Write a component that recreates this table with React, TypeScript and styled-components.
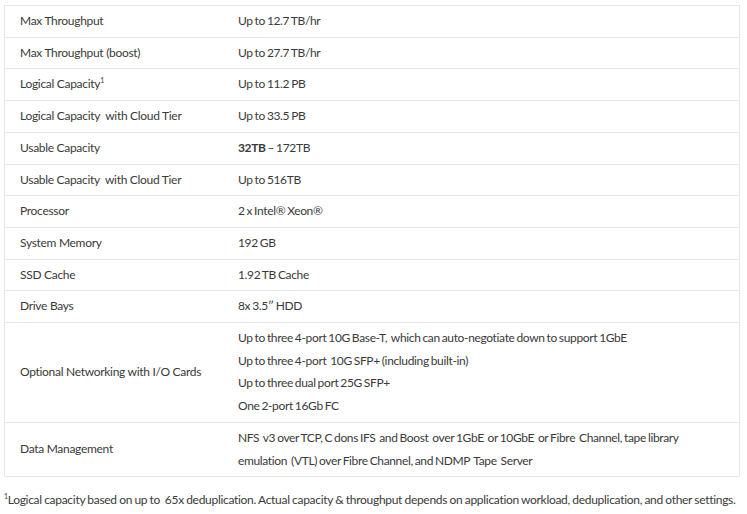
import styled, { createGlobalStyle } from "styled-components";

const colors = {
  text: "#3a3a3a",
  border: "#e6e6e6",
  white: "#fff",
};

const GlobalStyle = createGlobalStyle`
  body {
    margin: 0;
    background: ${colors.white};
    font-family: Lato, "Open Sans", Arial, sans-serif;
    color: ${colors.text};
  }
`;

const Page = styled.div`
  padding: 5px 7px 0 4px;
  font-size: 12px;
  line-height: 22.7px;
  letter-spacing: -0.3px;
`;

const SpecTable = styled.table`
  width: 736px;
  table-layout: fixed;
  border-collapse: collapse;
  border: 1px solid ${colors.border};
`;

const Row = styled.tr`
  border-top: 1px solid ${colors.border};
`;

const LabelCell = styled.td`
  width: 186px;
  padding: 4px 16px 4px 15px;
  vertical-align: middle;
  white-space: nowrap;
`;

const ValueCell = styled.td`
  padding: 4px 16px;
  vertical-align: middle;
  letter-spacing: -0.35px;
  word-spacing: -0.8px;
`;

const Line = styled.div``;

const Sup = styled.sup`
  font-size: 7px;
  line-height: 0;
  vertical-align: 5px;
`;

const Footnote = styled.p`
  margin: 12px 0 0;
  white-space: nowrap;
  word-spacing: -0.4px;
`;

type Spec = {
  label: React.ReactNode;
  value: React.ReactNode;
};

const specs: Spec[] = [
  { label: "Max Throughput", value: "Up to 12.7 TB/hr" },
  { label: "Max Throughput (boost)", value: "Up to 27.7 TB/hr" },
  {
    label: (
      <>
        Logical Capacity<Sup>1</Sup>
      </>
    ),
    value: "Up to 11.2 PB",
  },
  { label: "Logical Capacity\u00a0 with Cloud Tier", value: "Up to 33.5 PB" },
  {
    label: "Usable Capacity",
    value: (
      <>
        <b>32TB</b> – 172TB
      </>
    ),
  },
  { label: "Usable Capacity\u00a0 with Cloud Tier", value: "Up to 516TB" },
  { label: "Processor", value: "2 x Intel® Xeon®" },
  { label: "System Memory", value: "192 GB" },
  { label: "SSD Cache", value: "1.92 TB Cache" },
  { label: "Drive Bays", value: "8x 3.5″ HDD" },
  {
    label: "Optional Networking with I/O Cards",
    value: [
      "Up to three 4-port 10G Base-T,\u00a0 which can auto-negotiate down to support 1GbE",
      "Up to three 4-port\u00a0 10G SFP+ (including built-in)",
      "Up to three dual port 25G SFP+",
      "One 2-port 16Gb FC",
    ].map((l) => <Line key={l}>{l}</Line>),
  },
  {
    label: "Data Management",
    value: (
      <>
        <Line>
          NFS&nbsp; v3 over TCP, C dons IFS&nbsp; and Boost&nbsp; over 1GbE&nbsp; or 10GbE&nbsp; or
          Fibre&nbsp; Channel, tape library
        </Line>
        <Line>emulation&nbsp; (VTL) over Fibre Channel, and NDMP&nbsp; Tape&nbsp; Server</Line>
      </>
    ),
  },
];

const App = () => {
  return (
    <Page>
      <GlobalStyle />
      <SpecTable>
        <tbody>
          {specs.map((s, idx) => (
            <Row key={`spec-${idx}`}>
              <LabelCell>{s.label}</LabelCell>
              <ValueCell>{s.value}</ValueCell>
            </Row>
          ))}
        </tbody>
      </SpecTable>
      <Footnote>
        <Sup>1</Sup>Logical capacity based on up to&nbsp; 65x deduplication. Actual capacity &amp;
        throughput depends on application workload, deduplication, and other settings.
      </Footnote>
    </Page>
  );
};

export default App;
